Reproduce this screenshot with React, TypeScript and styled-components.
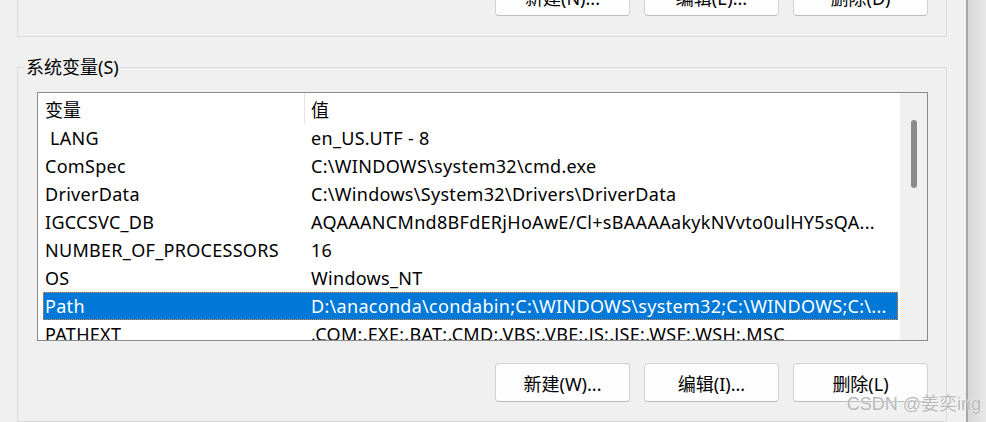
import React from "react";
import styled, { createGlobalStyle } from "styled-components";

const GlobalStyle = createGlobalStyle`
  html, body {
    margin: 0;
    padding: 0;
    background: #f0f0f0;
    overflow: hidden;
  }
  body {
    font-family: "Noto Sans", "Noto Sans CJK SC", sans-serif;
    color: #000;
  }
`;

const Window = styled.div`
  position: relative;
  display: flex;
  width: 986px;
  height: 422px;
  overflow: hidden;
`;

const Main = styled.div`
  flex: 1;
  display: flex;
  flex-direction: column;
  padding: 0 19px 0 17px;
  min-width: 0;
`;

const RightEdge = styled.div`
  width: 18px;
  border-left: 2px solid #a6a6a6;
  background: linear-gradient(to right, #d6d6d6, #e8e8e8);
`;

const UserGroup = styled.div`
  box-sizing: border-box;
  height: 41px;
  border: 1px solid #dcdcdc;
  border-top: none;
  padding-right: 18px;
`;

const ButtonRow = styled.div<{ $offset?: number }>`
  display: flex;
  justify-content: flex-end;
  gap: 14px;
  margin-top: ${(p) => p.$offset ?? 0}px;
`;

const Button = styled.button`
  box-sizing: border-box;
  width: 135px;
  height: 39px;
  padding: 0;
  border: 1px solid #d1d1d1;
  border-bottom-color: #bcbcbc;
  border-radius: 4px;
  background: #fdfdfd;
  font-family: "Noto Sans", "Noto Sans CJK SC", sans-serif;
  font-size: 18px;
  color: #000;
`;

const SystemGroup = styled.fieldset`
  margin: 19px 0 0;
  padding: 0;
  min-width: 0;
  height: 400px;
  border: 1px solid #dcdcdc;
`;

const GroupTitle = styled.legend`
  margin-left: 7px;
  padding: 0 1px;
  font-size: 18px;
  line-height: 22px;
`;

const GroupBody = styled.div`
  padding: 14px 18px 0 19px;
`;

const ListBox = styled.div`
  box-sizing: border-box;
  display: flex;
  height: 249px;
  border: 1px solid #8a8a8a;
  background: #fff;
  overflow: hidden;
`;

const ListContent = styled.div`
  flex: 1;
  min-width: 0;
  padding: 0 1px 0 5px;
`;

const Columns = styled.div`
  display: grid;
  grid-template-columns: 261px minmax(0, 1fr);
`;

const HeaderRow = styled(Columns)`
  height: 31px;
  align-items: center;
`;

const HeaderCell = styled.div<{ $split?: boolean }>`
  height: 100%;
  display: flex;
  align-items: center;
  font-size: 18px;
  padding-left: ${(p) => (p.$split ? 6 : 2)}px;
  border-left: ${(p) => (p.$split ? "1px solid #e5e5e5" : "none")};
`;

const Row = styled(Columns)<{ $selected?: boolean }>`
  box-sizing: border-box;
  height: 28px;
  align-items: center;
  font-size: 18px;
  letter-spacing: 0.3px;
  background: ${(p) => (p.$selected ? "#0078d7" : "transparent")};
  color: ${(p) => (p.$selected ? "#fff" : "#000")};
  outline: ${(p) => (p.$selected ? "1px dotted #e0882e" : "none")};
  outline-offset: -1px;
`;

const Cell = styled.div<{ $value?: boolean }>`
  padding-left: ${(p) => (p.$value ? 7 : 2)}px;
  white-space: pre;
  overflow: hidden;
  text-overflow: ellipsis;
`;

const ScrollTrack = styled.div`
  width: 27px;
  display: flex;
  justify-content: center;
  padding-top: 27px;
  background: #f0f0f0;
  border-left: 1px solid #fff;
`;

const Thumb = styled.div`
  width: 6px;
  height: 68px;
  border-radius: 3px;
  background: #8a8a8a;
`;

const Watermark = styled.div`
  position: absolute;
  right: 5px;
  bottom: 7px;
  font-family: "Liberation Sans", "Noto Sans CJK SC", sans-serif;
  font-size: 18px;
  color: #b8b8b8;
  text-shadow: 0 0 1px #fff, 0 0 1px #fff;
`;

const variables: { name: string; value: string }[] = [
  { name: " LANG", value: "en_US.UTF - 8" },
  { name: "ComSpec", value: "C:\\WINDOWS\\system32\\cmd.exe" },
  { name: "DriverData", value: "C:\\Windows\\System32\\Drivers\\DriverData" },
  {
    name: "IGCCSVC_DB",
    value: "AQAAANCMnd8BFdERjHoAwE/Cl+sBAAAAakykNVvto0ulHY5sQA...",
  },
  { name: "NUMBER_OF_PROCESSORS", value: "16" },
  { name: "OS", value: "Windows_NT" },
  {
    name: "Path",
    value: "D:\\anaconda\\condabin;C:\\WINDOWS\\system32;C:\\WINDOWS;C:\\...",
  },
  {
    name: "PATHEXT",
    value: ".COM;.EXE;.BAT;.CMD;.VBS;.VBE;.JS;.JSE;.WSF;.WSH;.MSC",
  },
];

const App: React.FC = () => {
  return (
    <Window>
      <GlobalStyle />
      <Main>
        <UserGroup>
          <ButtonRow $offset={-23}>
            <Button>新建(N)...</Button>
            <Button>编辑(E)...</Button>
            <Button>删除(D)</Button>
          </ButtonRow>
        </UserGroup>

        <SystemGroup>
          <GroupTitle>系统变量(S)</GroupTitle>
          <GroupBody>
            <ListBox>
              <ListContent>
                <HeaderRow>
                  <HeaderCell>变量</HeaderCell>
                  <HeaderCell $split>值</HeaderCell>
                </HeaderRow>
                {variables.map((v) => (
                  <Row key={v.name} $selected={v.name === "Path"}>
                    <Cell>{v.name}</Cell>
                    <Cell $value>{v.value}</Cell>
                  </Row>
                ))}
              </ListContent>
              <ScrollTrack>
                <Thumb />
              </ScrollTrack>
            </ListBox>
            <ButtonRow $offset={22}>
              <Button>新建(W)...</Button>
              <Button>编辑(I)...</Button>
              <Button>删除(L)</Button>
            </ButtonRow>
          </GroupBody>
        </SystemGroup>
      </Main>
      <RightEdge />
      <Watermark>CSDN @姜奕ing</Watermark>
    </Window>
  );
};

export default App;
